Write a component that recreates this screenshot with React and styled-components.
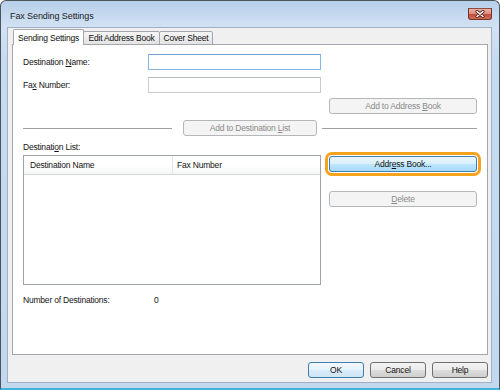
import React from 'react';
import styled, { createGlobalStyle } from 'styled-components';

const GlobalStyle = createGlobalStyle`
  html, body {
    margin: 0;
    padding: 0;
    background: #ffffff;
  }
  body {
    font-family: "Liberation Sans", Arial, sans-serif;
  }
`;

const Window = styled.div`
  width: 500px;
  height: 390px;
  box-sizing: border-box;
  display: flex;
  flex-direction: column;
  background: linear-gradient(#b7cfe9, #d2e2f4 26px, #c6daf0 60px, #c3d8ef);
  border: 1px solid #4b535c;
  border-bottom: 2px solid #3fb4d8;
  border-radius: 6px 6px 0 0;
  padding: 0 7px 5px 6px;
`;

const TitleBar = styled.div`
  height: 26px;
  display: flex;
  align-items: flex-start;
  justify-content: space-between;
`;

const Title = styled.div`
  padding: 10px 0 0 3px;
  font-size: 9px;
  letter-spacing: -0.1px;
  color: #1c1c1c;
`;

const CloseButton = styled.div`
  margin-top: 7px;
  width: 24px;
  height: 12px;
  box-sizing: border-box;
  border: 1px solid #7a3328;
  border-top-color: #8e4a3f;
  border-radius: 0 0 3px 3px;
  background: linear-gradient(#eab2a5, #d8907f 45%, #c2523e 55%, #cf6c58);
  display: flex;
  align-items: center;
  justify-content: center;
`;

const Client = styled.div`
  flex: 1;
  display: flex;
  flex-direction: column;
  background: #f0f0f0;
  border: 1px solid #9fb0c4;
`;

const TabRow = styled.div`
  display: flex;
  align-items: flex-end;
  height: 16px;
  margin-top: 1px;
  margin-bottom: -1px;
  padding-left: 5px;
  position: relative;
  z-index: 1;
`;

const Tab = styled.div`
  box-sizing: border-box;
  width: ${p => p.w}px;
  height: ${p => (p.active ? 16 : 14)}px;
  margin-left: ${p => (p.first ? 0 : -1)}px;
  border: 1px solid #a3a7ad;
  border-bottom: ${p => (p.active ? 'none' : '1px solid #a3a7ad')};
  border-radius: 2px 2px 0 0;
  background: ${p => (p.active ? '#ffffff' : 'linear-gradient(#f5f5f5, #e3e3e3)')};
  font-size: 8.5px;
  letter-spacing: -0.2px;
  color: #111;
  display: flex;
  align-items: center;
  justify-content: center;
  z-index: ${p => (p.active ? 2 : 1)};
`;

const Pane = styled.div`
  height: 311px;
  box-sizing: border-box;
  margin: 0 3px 0 4px;
  background: #ffffff;
  border: 1px solid #a3a7ad;
  padding: 9px 10px 0 10px;
  display: flex;
  flex-direction: column;
  font-size: 8.5px;
  letter-spacing: -0.2px;
  color: #141414;
`;

const FieldRow = styled.div`
  display: flex;
  align-items: center;
  height: 16px;
  margin-top: ${p => p.mt || 0}px;
`;

const Label = styled.div`
  width: ${p => p.w || 125}px;
  flex-shrink: 0;
`;

const Key = styled.span`
  text-decoration: underline;
  text-underline-offset: 1px;
`;

const TextBox = styled.input`
  box-sizing: border-box;
  width: 173px;
  height: 16px;
  margin: 0;
  padding: 0 3px;
  background: #ffffff;
  border: 1px solid ${p => (p.focused ? '#84b5e4' : '#c9cdd2')};
  border-top-color: ${p => (p.focused ? '#6ea3d8' : '#b8bdc3')};
  outline: none;
  font: inherit;
`;

const RightAligned = styled.div`
  display: flex;
  justify-content: flex-end;
  margin-top: ${p => p.mt || 0}px;
`;

const Button = styled.button`
  box-sizing: border-box;
  width: ${p => p.w}px;
  height: 16px;
  margin: 0;
  padding: 0;
  border: 1px solid #707070;
  border-radius: 3px;
  background: linear-gradient(#f3f3f3, #ebebeb 48%, #dddddd 52%, #cfcfcf);
  font-family: inherit;
  font-size: 8.5px;
  letter-spacing: -0.2px;
  color: #111;
  cursor: default;

  &:disabled {
    border-color: #b3b7ba;
    background: #f4f4f4;
    color: #8a8a8a;
  }

  &.default {
    border-color: #3c7fb1;
    background: linear-gradient(#f2f8fd, #e6f2fb 48%, #d8ebf8 52%, #cfe5f5);
  }

  &.hot {
    border-color: #3c7fb1;
    background: linear-gradient(#eaf6fd, #d9f0fc 48%, #bee6fd 52%, #a7d9f5);
    box-shadow: 0 0 0 1px #ffffff, 0 0 0 4px #f5a21c;
  }
`;

const SeparatorRow = styled.div`
  display: flex;
  align-items: center;
  margin-top: 6px;
`;

const Rule = styled.div`
  height: 0;
  border-top: 1px solid #a0a0a0;
  width: ${p => (p.w ? `${p.w}px` : 'auto')};
  flex: ${p => (p.w ? '0 0 auto' : '1')};
`;

const Main = styled.div`
  display: flex;
  gap: 8px;
  margin-top: 6px;
`;

const LeftColumn = styled.div`
  width: 298px;
  display: flex;
  flex-direction: column;
`;

const RightColumn = styled.div`
  width: 148px;
  display: flex;
  flex-direction: column;
  gap: 19px;
  padding-top: 14px;
`;

const CaptionText = styled.div`
  height: 11px;
  line-height: 11px;
`;

const ListBox = styled.div`
  margin-top: 2px;
  height: 130px;
  box-sizing: border-box;
  border: 1px solid #a0a5ac;
  background: #ffffff;
`;

const ListHeader = styled.div`
  display: flex;
  height: 18px;
  border-bottom: 1px solid #d5d5d5;
  background: linear-gradient(#ffffff, #ffffff 50%, #f5f6f7);
`;

const HeaderCell = styled.div`
  box-sizing: border-box;
  width: ${p => (p.w ? `${p.w}px` : 'auto')};
  flex: ${p => (p.w ? '0 0 auto' : '1')};
  padding-left: ${p => p.pl}px;
  display: flex;
  align-items: center;
  border-right: ${p => (p.w ? '1px solid #e3e5e8' : 'none')};
`;

const CountRow = styled.div`
  display: flex;
  align-items: center;
  margin-top: 9px;
  height: 11px;
`;

const ButtonRow = styled.div`
  display: flex;
  justify-content: flex-end;
  gap: 6px;
  margin-top: 7px;
  padding-right: 3px;
`;

function CloseGlyph() {
  return (
    <svg width="10" height="8" viewBox="0 0 10 8">
      <path d="M2 1.5 L8 6.5 M8 1.5 L2 6.5" stroke="#5a1f16" strokeWidth="3.2" strokeLinecap="round" />
      <path d="M2 1.5 L8 6.5 M8 1.5 L2 6.5" stroke="#ffffff" strokeWidth="1.6" strokeLinecap="round" />
    </svg>
  );
}

export default function App() {
  return (
    <>
      <GlobalStyle />
      <Window>
        <TitleBar>
          <Title>Fax Sending Settings</Title>
          <CloseButton>
            <CloseGlyph />
          </CloseButton>
        </TitleBar>

        <Client>
          <TabRow>
            <Tab first active w={71}>Sending Settings</Tab>
            <Tab w={77}>Edit Address Book</Tab>
            <Tab w={54}>Cover Sheet</Tab>
          </TabRow>

          <Pane>
            <FieldRow>
              <Label>Destination <Key>N</Key>ame:</Label>
              <TextBox focused readOnly value="" />
            </FieldRow>
            <FieldRow mt={7}>
              <Label>Fa<Key>x</Key> Number:</Label>
              <TextBox readOnly value="" />
            </FieldRow>

            <RightAligned mt={5}>
              <Button w={148} disabled>Add to Address <Key>B</Key>ook</Button>
            </RightAligned>

            <SeparatorRow>
              <Rule w={149} />
              <Button w={134} disabled style={{ margin: '0 5px 0 11px' }}>
                Add to Destination <Key>L</Key>ist
              </Button>
              <Rule />
            </SeparatorRow>

            <Main>
              <LeftColumn>
                <CaptionText>Destinati<Key>o</Key>n List:</CaptionText>
                <ListBox>
                  <ListHeader>
                    <HeaderCell w={149} pl={6}>Destination Name</HeaderCell>
                    <HeaderCell pl={4}>Fax Number</HeaderCell>
                  </ListHeader>
                </ListBox>
                <CountRow>
                  <Label w={131}>Number of Destinations:</Label>
                  <span>0</span>
                </CountRow>
              </LeftColumn>

              <RightColumn>
                <Button w={148} className="hot">Addr<Key>e</Key>ss Book...</Button>
                <Button w={148} disabled><Key>D</Key>elete</Button>
              </RightColumn>
            </Main>
          </Pane>

          <ButtonRow>
            <Button w={56} className="default">OK</Button>
            <Button w={56}>Cancel</Button>
            <Button w={56}>Help</Button>
          </ButtonRow>
        </Client>
      </Window>
    </>
  );
}
